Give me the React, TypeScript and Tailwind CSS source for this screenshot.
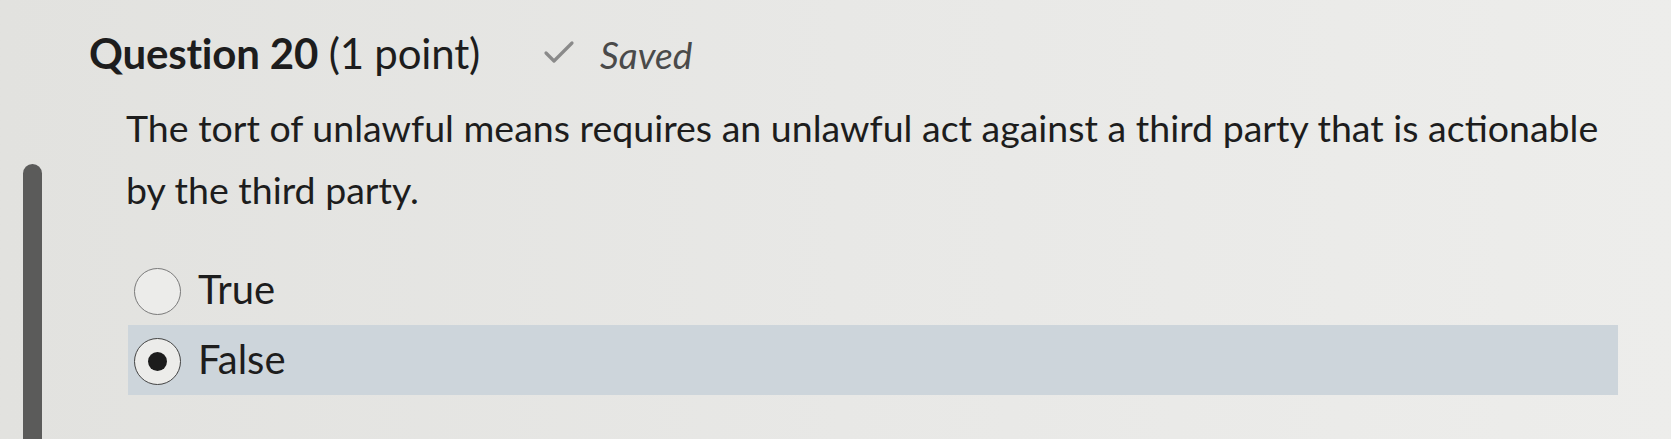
import React from 'react';

const options = [
  { id: 'true', label: 'True', checked: false },
  { id: 'false', label: 'False', checked: true },
];

const Radio: React.FC<{ checked: boolean }> = ({ checked }) => (
  <span
    className={`flex h-[47px] w-[47px] shrink-0 items-center justify-center rounded-full border-[1.5px] bg-[#ececea] ${
      checked ? 'border-[#444444]' : 'border-[#7a7a7a]'
    }`}
  >
    {checked && <span className="h-[19px] w-[19px] rounded-full bg-[#1c1c1c]" />}
  </span>
);

const App: React.FC = () => {
  return (
    <div className="h-[439px] w-full overflow-hidden bg-gradient-to-r from-[#e2e2df] via-[#e8e8e6] to-[#ededeb] font-['Lato','Liberation_Sans',sans-serif] text-[#1d1d1d]">
      {/* Header */}
      <div className="flex items-baseline pl-[89px] pt-[27px]">
        <h2 className="text-[42px] leading-[1.2] tracking-[-0.2px]">
          <span className="font-bold">Question 20</span>{' '}
          <span className="font-normal">(1 point)</span>
        </h2>
        <div className="ml-[63px] flex items-baseline gap-[25px] text-[#4a4a4a]">
          <svg width="32" height="24" viewBox="0 0 32 24" className="self-center translate-y-[-3px]">
            <path d="M3 13 L11 21 L29 3" fill="none" stroke="#8a8a8a" strokeWidth="3.2" strokeLinecap="round" strokeLinejoin="round" />
          </svg>
          <span className="text-[37px] italic">Saved</span>
        </div>
      </div>

      {/* Question body */}
      <div className="flex">
        <div className="ml-[23px] mt-[81px] h-[300px] w-[19px] shrink-0 rounded-t-full bg-[#5b5b5a]" />
        <div className="ml-[84px] w-[1492px] pt-[14px]">
          <p className="text-[37.5px] leading-[62px]">
            The tort of unlawful means requires an unlawful act against a third party that is actionable by the third party.
          </p>
          <div className="mt-[34px] ml-[2px] flex flex-col">
            {options.map((o) => (
              <label
                key={o.id}
                className={`flex h-[70px] items-center gap-[17px] pl-[6px] ${o.checked ? 'bg-[#cdd5db]' : ''}`}
              >
                <span className="translate-y-[2px]">
                  <Radio checked={o.checked} />
                </span>
                <span className="text-[40px] leading-none pb-[2px]">{o.label}</span>
              </label>
            ))}
          </div>
        </div>
      </div>
    </div>
  );
};

export default App;
